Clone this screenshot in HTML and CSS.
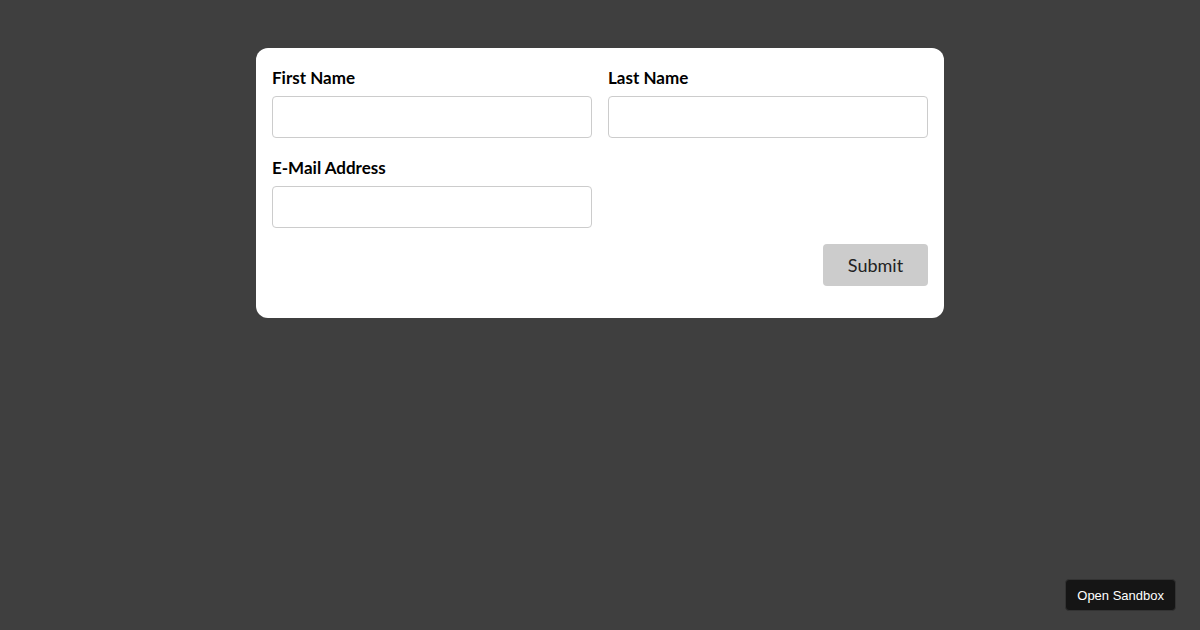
FILE: index.html
```html
<!DOCTYPE html>
<html>
<head>
<meta charset="utf-8">
<link rel="stylesheet" href="styles.css">
</head>
<body>
<main class="page">
  <form class="card">
    <div class="grid">
      <div class="field">
        <label class="label">First Name</label>
        <input class="input" type="text">
      </div>
      <div class="field">
        <label class="label">Last Name</label>
        <input class="input" type="text">
      </div>
      <div class="field">
        <label class="label">E-Mail Address</label>
        <input class="input" type="email">
      </div>
    </div>
    <div class="actions">
      <button class="submit" type="button">Submit</button>
    </div>
  </form>
</main>
<a class="sandbox">Open Sandbox</a>
</body>
</html>
```
FILE: styles.css
```css
html, body {
  margin: 0;
  padding: 0;
  background: #3f3f3f;
  height: 100%;
}
body {
  font-family: Lato, "Open Sans", sans-serif;
}
.page {
  display: flex;
  justify-content: center;
  padding-top: 48px;
}
.card {
  width: 688px;
  box-sizing: border-box;
  background: #fff;
  border-radius: 12px;
  padding: 16px 16px 32px;
}
.grid {
  display: grid;
  grid-template-columns: 1fr 1fr;
  column-gap: 16px;
  row-gap: 16px;
}
.field {
  display: flex;
  flex-direction: column;
}
.label {
  font-size: 17px;
  font-weight: 700;
  color: #000;
  line-height: 24px;
  padding-top: 2px;
  margin-bottom: 6px;
}
.input {
  height: 42px;
  box-sizing: border-box;
  border: 1px solid #cccccc;
  border-radius: 4px;
  margin: 0;
  font-size: 16px;
  padding: 0 10px;
}
.actions {
  display: flex;
  justify-content: flex-end;
  margin-top: 16px;
}
.submit {
  width: 105px;
  height: 42px;
  border: none;
  border-radius: 4px;
  background: #cccccc;
  color: #222;
  font-family: Lato, sans-serif;
  font-size: 18px;
}
.sandbox {
  position: fixed;
  right: 24px;
  bottom: 19px;
  height: 32px;
  box-sizing: border-box;
  padding: 0 11px;
  display: flex;
  align-items: center;
  background: #151515;
  border: 1px solid #333;
  border-radius: 4px;
  color: #fff;
  font-family: "Liberation Sans", Arial, sans-serif;
  font-size: 13px;
}
```
